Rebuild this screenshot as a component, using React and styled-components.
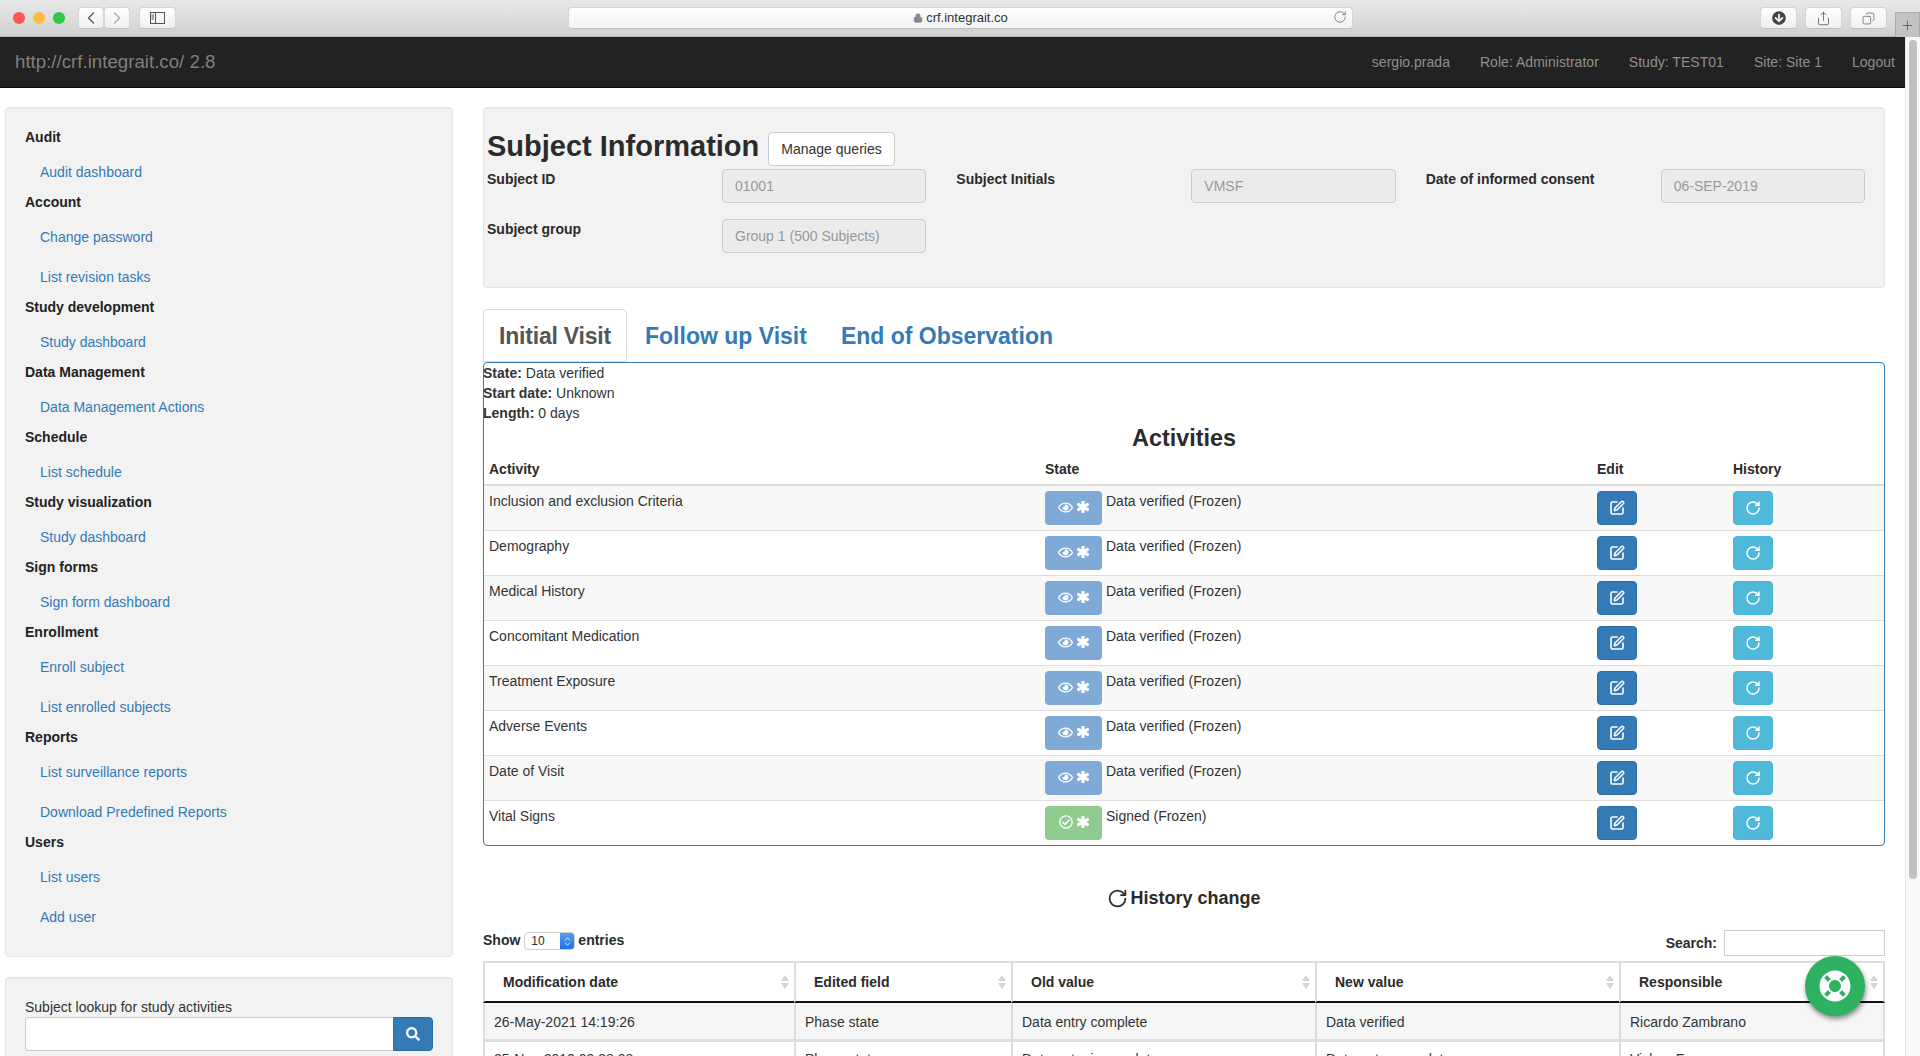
import React from 'react';
import styled, { createGlobalStyle } from 'styled-components';
import { ChevronLeft, ChevronRight, ChevronsUpDown, Lock, RotateCw, Share, Copy, Plus, SquarePen } from 'lucide-react';
import { FaArrowCircleDown, FaLifeRing, FaRegEye, FaRegCheckCircle, FaAsterisk, FaSearch } from 'react-icons/fa';

const GlobalStyle = createGlobalStyle`
  html, body {
    margin: 0;
    padding: 0;
    height: 1056px;
    overflow: hidden;
    background: #fff;
  }
  body {
    font-family: "Liberation Sans", Arial, sans-serif;
    font-size: 14px;
    line-height: 20px;
    color: #333;
  }
  * { box-sizing: border-box; }
`;

const Window = styled.div`
  position: relative;
  width: 1920px;
  height: 1056px;
  overflow: hidden;
`;

/* browser chrome */
const Toolbar = styled.div`
  position: relative;
  height: 37px;
  display: flex;
  align-items: flex-start;
  padding: 7px 0 0 13px;
  background: linear-gradient(#e9e9e9, #d0d0d0);
  border-bottom: 1px solid #b4b4b4;
`;

const Lights = styled.div`
  display: flex;
  flex: none;
  gap: 8px;
  margin: 5px 13px 0 0;
`;

const Light = styled.span`
  width: 12px;
  height: 12px;
  border-radius: 50%;
  background: ${p => p.$color};
`;

const ToolButton = styled.div`
  flex: none;
  width: ${p => p.$width || 37}px;
  height: 22px;
  margin-left: ${p => p.$gap || 0}px;
  display: flex;
  align-items: center;
  justify-content: center;
  background: linear-gradient(#fdfdfd, #f1f1f1);
  border: 1px solid #d4d4d4;
  border-bottom-color: #bdbdbd;
  border-radius: 4px;
  color: ${p => p.$color || '#555'};
`;

const AddressBar = styled.div`
  position: relative;
  flex: none;
  width: 785px;
  height: 22px;
  margin-left: 392px;
  display: flex;
  align-items: center;
  justify-content: center;
  gap: 3px;
  background: linear-gradient(#fdfdfd, #f3f3f3);
  border: 1px solid #d4d4d4;
  border-bottom-color: #bdbdbd;
  border-radius: 4px;
  font-size: 13px;
  color: #333;
`;

const Reload = styled.span`
  position: absolute;
  right: 5px;
  top: 2px;
  color: #666;
  display: flex;
`;

const NewTab = styled.div`
  flex: none;
  width: 25px;
  height: 25px;
  margin: 5px 0 0 8px;
  display: flex;
  align-items: center;
  justify-content: center;
  background: #c4c4c4;
  border: 1px solid #aaa;
  border-bottom: 0;
  color: #555;
`;

const Viewport = styled.div`
  display: flex;
  height: 1019px;
`;

const Page = styled.div`
  width: 1905px;
  flex: none;
`;

const ScrollTrack = styled.div`
  width: 15px;
  padding: 3px 3px 0 3px;
  background: #f9f9f9;
  border-left: 1px solid #e6e6e6;
`;

const ScrollThumb = styled.div`
  width: 8px;
  height: 839px;
  border-radius: 4px;
  background: #c1c1c1;
`;

/* navbar */
const Navbar = styled.div`
  height: 51px;
  display: flex;
  align-items: center;
  justify-content: space-between;
  padding: 0 10px 1px 15px;
  background: #222;
  border-bottom: 1px solid #080808;
  color: #8f8f8f;
`;

const Brand = styled.div`
  font-size: 18.7px;
  color: #7f7f7f;
`;

const NavLinks = styled.div`
  display: flex;
  gap: 30px;
  letter-spacing: 0.03px;
`;

/* layout */
const Content = styled.div`
  display: grid;
  grid-template-columns: 448px 1402px;
  column-gap: 30px;
  padding: 19px 0 0 5px;
`;

const Well = styled.div`
  background: #f2f2f2;
  border: 1px solid #e3e3e3;
  border-radius: 4px;
  box-shadow: inset 0 1px 1px rgba(0, 0, 0, 0.05);
`;

const SideWell = styled(Well)`
  padding: 19px;
  margin-bottom: 20px;
`;

const NavHeader = styled.div`
  font-weight: bold;
  margin-bottom: 5px;
  color: #222;
`;

const NavLink = styled.a`
  display: block;
  padding: 10px 15px;
  color: #337ab7;
`;

const LookupLabel = styled.div`
  color: #333;
`;

const LookupGroup = styled.div`
  display: flex;
  height: 34px;
`;

const LookupInput = styled.div`
  flex: 1;
  background: #fff;
  border: 1px solid #ccc;
  border-right: 0;
  border-radius: 4px 0 0 4px;
`;

const LookupButton = styled.div`
  width: 40px;
  display: flex;
  align-items: center;
  justify-content: center;
  background: #337ab7;
  border: 1px solid #2e6da4;
  border-radius: 0 4px 4px 0;
  color: #fff;
`;

/* subject info */
const InfoWell = styled(Well)`
  height: 181px;
  padding: 24px 19px 0 3px;
  margin-bottom: 21px;
`;

const TitleRow = styled.div`
  display: flex;
  align-items: center;
  gap: 9px;
  height: 34px;
  margin-bottom: 3px;
`;

const Title = styled.h2`
  margin: 0 0 6px;
  font-size: 29px;
  line-height: 33px;
  font-weight: bold;
  color: #2b2b2b;
`;

const DefaultButton = styled.div`
  height: 34px;
  padding: 6px 12px;
  background: #fff;
  border: 1px solid #ccc;
  border-radius: 4px;
  color: #333;
`;

const FieldGrid = styled.div`
  display: grid;
  grid-template-columns: repeat(3, 1fr);
  gap: 16px 30px;
`;

const Field = styled.div`
  display: grid;
  grid-template-columns: 235px 1fr;
`;

const FieldLabel = styled.label`
  font-weight: bold;
  color: #2b2b2b;
`;

const ReadOnlyInput = styled.div`
  height: 34px;
  padding: 6px 12px;
  background: #ebebeb;
  border: 1px solid #ccc;
  border-radius: 4px;
  color: #999;
`;

/* tabs */
const Tabs = styled.div`
  display: flex;
  gap: 2px;
  height: 53px;
`;

const Tab = styled.div`
  padding: 12px 15px 0;
  font-size: 23px;
  line-height: 28px;
  font-weight: bold;
  letter-spacing: ${p => (p.$active ? '-0.2px' : '0')};
  border: 1px solid ${p => (p.$active ? '#ddd' : 'transparent')};
  border-radius: 4px 4px 0 0;
  color: ${p => (p.$active ? '#555' : '#337ab7')};
`;

const TabPanel = styled.div`
  height: 484px;
  border: 1px solid #337ab7;
  border-radius: 4px;
`;

const Meta = styled.div`
  margin-left: -1px;
  color: #333;
`;

const ActivitiesTitle = styled.h2`
  margin: 0;
  height: 31px;
  font-size: 23.4px;
  line-height: 31px;
  font-weight: bold;
  text-align: center;
  color: #2b2b2b;
`;

const ActivityTable = styled.table`
  width: 100%;
  table-layout: fixed;
  border-collapse: separate;
  border-spacing: 0;
`;

const ActivityHead = styled.th`
  padding: 5px;
  text-align: left;
  font-weight: bold;
  color: #2b2b2b;
  border-bottom: 2px solid #ddd;
`;

const ActivityRow = styled.tr`
  background: ${p => (p.$striped ? '#f8f8f8' : 'transparent')};
  &:last-child td { border-bottom: 0; }
`;

const ActivityCell = styled.td`
  padding: 5px;
  vertical-align: top;
  border-bottom: 1px solid #ddd;
`;

const StateWrap = styled.div`
  display: flex;
  gap: 4px;
`;

const StateButton = styled.div`
  width: 57px;
  height: 34px;
  padding-bottom: 2px;
  display: flex;
  align-items: center;
  justify-content: center;
  gap: 4px;
  border-radius: 4px;
  color: #fff;
  background: ${p => (p.$signed ? '#8fcb8f' : '#7fa9d6')};
`;

const IconButton = styled.div`
  width: 40px;
  height: 34px;
  padding-bottom: 1px;
  display: flex;
  align-items: center;
  justify-content: center;
  border-radius: 4px;
  color: #fff;
  background: ${p => p.$color};
  border: 1px solid ${p => p.$border};
`;

/* history */
const HistoryTitle = styled.h4`
  margin: 42px 0 0;
  height: 42px;
  display: flex;
  justify-content: center;
  gap: 2px;
  font-size: 18px;
  line-height: 20px;
  font-weight: bold;
  color: #2b2b2b;
`;

const TableControls = styled.div`
  display: flex;
  justify-content: space-between;
  align-items: flex-start;
  height: 31px;
  font-weight: bold;
  color: #2b2b2b;
`;

const LengthControl = styled.div`
  display: flex;
  align-items: flex-start;
  gap: 3px;
`;

const LengthSelect = styled.div`
  width: 51px;
  height: 18px;
  margin: 2px 0 0 1px;
  display: flex;
  justify-content: space-between;
  background: #fff;
  border: 1px solid #ccc;
  border-radius: 4px;
  font-size: 12px;
  line-height: 16px;
  font-weight: normal;
  padding-left: 6px;
  overflow: hidden;
`;

const Stepper = styled.span`
  width: 15px;
  margin: -1px;
  display: flex;
  align-items: center;
  justify-content: center;
  color: #fff;
  background: linear-gradient(#5b9df5, #1a6fe8);
`;

const SearchControl = styled.div`
  display: flex;
  gap: 7px;
`;

const SearchLabel = styled.span`
  margin-top: 3px;
`;

const SearchInput = styled.div`
  width: 161px;
  height: 26px;
  background: #fff;
  border: 1px solid #ccc;
`;

const HistoryTable = styled.table`
  width: 100%;
  table-layout: fixed;
  border-collapse: separate;
  border-spacing: 0;
`;

const HistoryHead = styled.th`
  height: 42px;
  padding: 0 5px 0 18px;
  text-align: left;
  font-weight: bold;
  color: #2b2b2b;
  background: #fff;
  border-top: 2px solid #ddd;
  border-left: 2px solid #ddd;
  border-bottom: 2px solid #111;
  &:last-child { border-right: 2px solid #ddd; }
`;

const HeadInner = styled.div`
  display: flex;
  align-items: center;
  justify-content: space-between;
`;

const SortArrows = styled.span`
  display: flex;
  flex-direction: column;
  gap: 2px;
`;

const SortArrow = styled.span`
  width: 0;
  height: 0;
  border-left: 4px solid transparent;
  border-right: 4px solid transparent;
  ${p => (p.$up ? 'border-bottom: 6px solid #d4d4d4;' : 'border-top: 6px solid #d4d4d4;')}
`;

const HistoryRow = styled.tr`
  background: ${p => (p.$striped ? '#f6f6f6' : '#fff')};
  &:first-child td { padding-top: 9px; padding-bottom: 7px; }
`;

const HistoryCell = styled.td`
  padding: 7px 8px 8px 9px;
  color: #333;
  border-left: 2px solid #ddd;
  border-bottom: 3px solid #ddd;
  &:last-child { border-right: 2px solid #ddd; }
`;

const HelpFab = styled.div`
  position: absolute;
  left: 1805px;
  top: 956px;
  width: 60px;
  height: 60px;
  display: flex;
  align-items: center;
  justify-content: center;
  border-radius: 50%;
  background: #2eb161;
  color: #fff;
  box-shadow: 1px 3px 5px rgba(0, 0, 0, 0.45);
`;

const menu = [
  { title: 'Audit', links: ['Audit dashboard'] },
  { title: 'Account', links: ['Change password', 'List revision tasks'] },
  { title: 'Study development', links: ['Study dashboard'] },
  { title: 'Data Management', links: ['Data Management Actions'] },
  { title: 'Schedule', links: ['List schedule'] },
  { title: 'Study visualization', links: ['Study dashboard'] },
  { title: 'Sign forms', links: ['Sign form dashboard'] },
  { title: 'Enrollment', links: ['Enroll subject', 'List enrolled subjects'] },
  { title: 'Reports', links: ['List surveillance reports', 'Download Predefined Reports'] },
  { title: 'Users', links: ['List users', 'Add user'] },
];

const activities = [
  'Inclusion and exclusion Criteria',
  'Demography',
  'Medical History',
  'Concomitant Medication',
  'Treatment Exposure',
  'Adverse Events',
  'Date of Visit',
  'Vital Signs',
];

const historyColumns = ['Modification date', 'Edited field', 'Old value', 'New value', 'Responsible'];

const historyRows = [
  ['26-May-2021 14:19:26', 'Phase state', 'Data entry complete', 'Data verified', 'Ricardo Zambrano'],
  ['25-Nov-2019 09:38:08', 'Phase state', 'Data entry incomplete', 'Data entry complete', 'Vicken Franco'],
];

const SidebarIcon = () => (
  <svg width="15" height="12" viewBox="0 0 15 12" fill="none" stroke="#555">
    <rect x="0.5" y="0.5" width="14" height="11" />
    <line x1="5.5" y1="0.5" x2="5.5" y2="11.5" />
    <line x1="1.5" y1="3" x2="4" y2="3" />
    <line x1="1.5" y1="5" x2="4" y2="5" />
    <line x1="1.5" y1="7" x2="4" y2="7" />
  </svg>
);

const App = () => {
  return (
    <Window>
      <GlobalStyle />
      <Toolbar>
        <Lights>
          <Light $color="#fc5753" />
          <Light $color="#fdbc40" />
          <Light $color="#33c748" />
        </Lights>
        <ToolButton $width={26}><ChevronLeft size={20} strokeWidth={1.5} /></ToolButton>
        <ToolButton $width={26} $color="#aaa"><ChevronRight size={20} strokeWidth={1.5} /></ToolButton>
        <ToolButton $gap={9}><SidebarIcon /></ToolButton>
        <AddressBar>
          <Lock size={10} fill="#888" color="#888" />
          <span>crf.integrait.co</span>
          <Reload><RotateCw size={14} strokeWidth={1.3} /></Reload>
        </AddressBar>
        <ToolButton $gap={407}><FaArrowCircleDown size={14} color="#444" /></ToolButton>
        <ToolButton $gap={8}><Share size={15} strokeWidth={1.3} /></ToolButton>
        <ToolButton $gap={8}><Copy size={13} strokeWidth={1.3} style={{ transform: 'scaleX(-1)' }} /></ToolButton>
        <NewTab><Plus size={15} strokeWidth={1.3} /></NewTab>
      </Toolbar>
      <Viewport>
        <Page>
          <Navbar>
            <Brand>http://crf.integrait.co/ 2.8</Brand>
            <NavLinks>
              <span>sergio.prada</span>
              <span>Role: Administrator</span>
              <span>Study: TEST01</span>
              <span>Site: Site 1</span>
              <span>Logout</span>
            </NavLinks>
          </Navbar>
          <Content>
            <aside>
              <SideWell>
                {menu.map(group => (
                  <div key={group.title}>
                    <NavHeader>{group.title}</NavHeader>
                    {group.links.map(link => (
                      <NavLink key={link}>{link}</NavLink>
                    ))}
                  </div>
                ))}
              </SideWell>
              <SideWell>
                <LookupLabel>Subject lookup for study activities</LookupLabel>
                <LookupGroup>
                  <LookupInput />
                  <LookupButton><FaSearch size={14} /></LookupButton>
                </LookupGroup>
              </SideWell>
            </aside>
            <main>
              <InfoWell>
                <TitleRow>
                  <Title>Subject Information</Title>
                  <DefaultButton>Manage queries</DefaultButton>
                </TitleRow>
                <FieldGrid>
                  <Field>
                    <FieldLabel>Subject ID</FieldLabel>
                    <ReadOnlyInput>01001</ReadOnlyInput>
                  </Field>
                  <Field>
                    <FieldLabel>Subject Initials</FieldLabel>
                    <ReadOnlyInput>VMSF</ReadOnlyInput>
                  </Field>
                  <Field>
                    <FieldLabel>Date of informed consent</FieldLabel>
                    <ReadOnlyInput>06-SEP-2019</ReadOnlyInput>
                  </Field>
                  <Field>
                    <FieldLabel>Subject group</FieldLabel>
                    <ReadOnlyInput>Group 1 (500 Subjects)</ReadOnlyInput>
                  </Field>
                </FieldGrid>
              </InfoWell>

              <Tabs>
                <Tab $active>Initial Visit</Tab>
                <Tab>Follow up Visit</Tab>
                <Tab>End of Observation</Tab>
              </Tabs>
              <TabPanel>
                <Meta><b>State:</b> Data verified</Meta>
                <Meta><b>Start date:</b> Unknown</Meta>
                <Meta><b>Length:</b> 0 days</Meta>
                <ActivitiesTitle>Activities</ActivitiesTitle>
                <ActivityTable>
                  <colgroup>
                    <col width="556" />
                    <col width="552" />
                    <col width="136" />
                    <col width="156" />
                  </colgroup>
                  <thead>
                    <tr>
                      <ActivityHead>Activity</ActivityHead>
                      <ActivityHead>State</ActivityHead>
                      <ActivityHead>Edit</ActivityHead>
                      <ActivityHead>History</ActivityHead>
                    </tr>
                  </thead>
                  <tbody>
                    {activities.map((name, index) => {
                      const signed = name === 'Vital Signs';
                      return (
                        <ActivityRow key={name} $striped={index % 2 === 0}>
                          <ActivityCell>{name}</ActivityCell>
                          <ActivityCell>
                            <StateWrap>
                              <StateButton $signed={signed}>
                                {signed ? <FaRegCheckCircle size={14} /> : <FaRegEye size={15} />}
                                <FaAsterisk size={12} stroke="currentColor" strokeWidth={50} />
                              </StateButton>
                              <span>{signed ? 'Signed (Frozen)' : 'Data verified (Frozen)'}</span>
                            </StateWrap>
                          </ActivityCell>
                          <ActivityCell>
                            <IconButton $color="#337ab7" $border="#2e6da4"><SquarePen size={16} strokeWidth={2.4} /></IconButton>
                          </ActivityCell>
                          <ActivityCell>
                            <IconButton $color="#50b8d9" $border="#46b8da"><RotateCw size={16} strokeWidth={2.2} /></IconButton>
                          </ActivityCell>
                        </ActivityRow>
                      );
                    })}
                  </tbody>
                </ActivityTable>
              </TabPanel>

              <HistoryTitle>
                <RotateCw size={21} strokeWidth={2} />
                History change
              </HistoryTitle>
              <TableControls>
                <LengthControl>
                  Show
                  <LengthSelect>10<Stepper><ChevronsUpDown size={11} strokeWidth={2} /></Stepper></LengthSelect>
                  entries
                </LengthControl>
                <SearchControl>
                  <SearchLabel>Search:</SearchLabel>
                  <SearchInput />
                </SearchControl>
              </TableControls>
              <HistoryTable>
                <colgroup>
                  <col width="311" />
                  <col width="217" />
                  <col width="304" />
                  <col width="304" />
                  <col width="266" />
                </colgroup>
                <thead>
                  <tr>
                    {historyColumns.map(column => (
                      <HistoryHead key={column}>
                        <HeadInner>
                          {column}
                          <SortArrows><SortArrow $up /><SortArrow /></SortArrows>
                        </HeadInner>
                      </HistoryHead>
                    ))}
                  </tr>
                </thead>
                <tbody>
                  {historyRows.map((row, index) => (
                    <HistoryRow key={row[0]} $striped={index % 2 === 0}>
                      {row.map((value, i) => (
                        <HistoryCell key={i}>{value}</HistoryCell>
                      ))}
                    </HistoryRow>
                  ))}
                </tbody>
              </HistoryTable>
            </main>
          </Content>
        </Page>
        <ScrollTrack>
          <ScrollThumb />
        </ScrollTrack>
      </Viewport>
      <HelpFab><FaLifeRing size={32} /></HelpFab>
    </Window>
  );
};

export default App;
